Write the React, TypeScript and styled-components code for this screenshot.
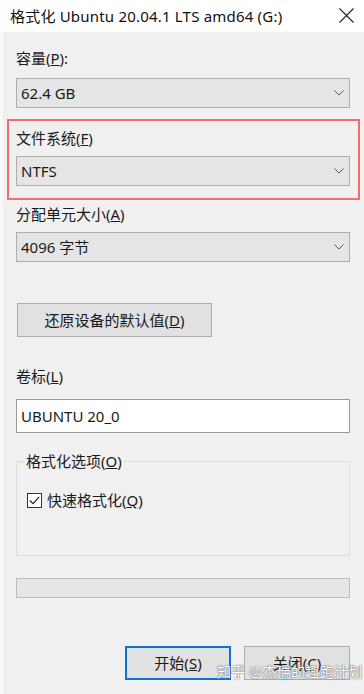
import React from "react";
import styled, { createGlobalStyle } from "styled-components";

const Global = createGlobalStyle`
  html, body { margin: 0; padding: 0; }
  body {
    font-family: "Noto Sans", "Noto Sans CJK SC", sans-serif;
    font-size: 15px;
    color: #1a1a1a;
    background: #f0f0f0;
  }
  #root { width: 364px; height: 694px; }
`;

const Window = styled.div`
  position: relative;
  width: 364px;
  height: 694px;
  display: flex;
  flex-direction: column;
  overflow: hidden;
`;

const TitleBar = styled.div`
  height: 32px;
  flex: none;
  background: #ffffff;
  display: flex;
  align-items: center;
  justify-content: space-between;
  padding: 0 10px 1px 10px;
  box-sizing: border-box;
  font-size: 15px;
  letter-spacing: 0.2px;
  color: #111;
`;

const CloseButton = styled.div`
  width: 16px;
  height: 16px;
  display: flex;
  align-items: center;
  justify-content: center;
`;

const Body = styled.div`
  flex: 1;
  background: #f0f0f0;
  border-left: 3px solid #f9f9f9;
  padding: 0 14px 0 13px;
  display: flex;
  flex-direction: column;
`;

const Label = styled.div<{ $mt: number }>`
  margin-top: ${(p) => p.$mt}px;
  height: 20px;
  line-height: 20px;
  white-space: nowrap;
`;

const Select = styled.div<{ $mt: number }>`
  margin-top: ${(p) => p.$mt}px;
  height: 30px;
  box-sizing: border-box;
  border: 1px solid #adadad;
  background: #e5e5e5;
  display: flex;
  align-items: center;
  justify-content: space-between;
  padding: 0 5px 0 4px;
  line-height: 20px;
`;

const Highlight = styled.div`
  margin: 11px -10px 0 -9px;
  border: 2px solid rgb(236, 110, 110);
  padding: 7px 8px 12px 7px;
  display: flex;
  flex-direction: column;
`;

const PlainButton = styled.div<{ $primary?: boolean }>`
  height: 34px;
  box-sizing: border-box;
  background: #e1e1e1;
  border: ${(p) => (p.$primary ? "2px solid #0a74d0" : "1px solid #adadad")};
  display: flex;
  align-items: center;
  justify-content: center;
  line-height: 20px;
  white-space: nowrap;
`;

const RestoreButton = styled(PlainButton)`
  margin-top: 41px;
  margin-left: 1px;
  width: 195px;
`;

const TextBox = styled.div`
  margin-top: 13px;
  height: 34px;
  box-sizing: border-box;
  border: 1px solid #9a9a9a;
  background: #ffffff;
  display: flex;
  align-items: center;
  padding: 0 4px;
  line-height: 20px;
`;

const Group = styled.fieldset`
  margin: 18px 0 0 0;
  border: 1px solid #dcdcdc;
  padding: 19px 10px 0 10px;
  height: 105px;
  box-sizing: border-box;
  min-width: 0;
`;

const Legend = styled.legend`
  margin-left: -3px;
  padding: 0 2px;
  line-height: 20px;
  font-size: 15px;
`;

const CheckRow = styled.div`
  display: flex;
  align-items: center;
  gap: 5px;
  height: 20px;
  line-height: 20px;
`;

const CheckBox = styled.div`
  width: 15px;
  height: 15px;
  box-sizing: border-box;
  border: 1px solid #333;
  background: #fff;
  display: flex;
  align-items: center;
  justify-content: center;
`;

const Progress = styled.div`
  margin-top: 22px;
  height: 20px;
  box-sizing: border-box;
  border: 1px solid #bcbcbc;
  background: #e6e6e6;
`;

const Footer = styled.div`
  margin-top: 48px;
  display: flex;
  justify-content: flex-end;
  gap: 13px;
`;

const FooterButton = styled(PlainButton)`
  width: 106px;
`;

const Watermark = styled.div`
  position: absolute;
  left: 217px;
  top: 663px;
  font-size: 14px;
  line-height: 18px;
  color: #ffffff;
  letter-spacing: 0.3px;
  text-shadow: 0 0 1px #555, 0 0 2px #777;
  white-space: nowrap;
`;

const Chevron = () => (
  <svg width="10" height="6" viewBox="0 0 10 6">
    <path d="M0.5 0.5 L5 5 L9.5 0.5" fill="none" stroke="#555" strokeWidth="1" />
  </svg>
);

export default function App() {
  return (
    <>
      <Global />
      <Window>
        <TitleBar>
          <span>格式化 Ubuntu 20.04.1 LTS amd64 (G:)</span>
          <CloseButton>
            <svg width="15" height="15" viewBox="0 0 15 15">
              <path d="M0.5 0.5 L14.5 14.5 M14.5 0.5 L0.5 14.5" stroke="#222" strokeWidth="1.1" />
            </svg>
          </CloseButton>
        </TitleBar>
        <Body>
          <Label $mt={16}>
            容量(<u>P</u>):
          </Label>
          <Select $mt={10}>
            <span>62.4 GB</span>
            <Chevron />
          </Select>
          <Highlight>
            <Label $mt={0}>
              文件系统(<u>F</u>)
            </Label>
            <Select $mt={8}>
              <span>NTFS</span>
              <Chevron />
            </Select>
          </Highlight>
          <Label $mt={4}>
            分配单元大小(<u>A</u>)
          </Label>
          <Select $mt={8}>
            <span>4096 字节</span>
            <Chevron />
          </Select>
          <RestoreButton>
            还原设备的默认值(<u>D</u>)
          </RestoreButton>
          <Label $mt={29}>
            卷标(<u>L</u>)
          </Label>
          <TextBox>UBUNTU 20_0</TextBox>
          <Group>
            <Legend>
              格式化选项(<u>O</u>)
            </Legend>
            <CheckRow>
              <CheckBox>
                <svg width="11" height="9" viewBox="0 0 11 9">
                  <path d="M0.8 4.5 L4 7.6 L10.2 0.8" fill="none" stroke="#222" strokeWidth="1.2" />
                </svg>
              </CheckBox>
              <span>
                快速格式化(<u>Q</u>)
              </span>
            </CheckRow>
          </Group>
          <Progress />
          <Footer>
            <FooterButton $primary>
              开始(<u>S</u>)
            </FooterButton>
            <FooterButton>
              关闭(<u>C</u>)
            </FooterButton>
          </Footer>
        </Body>
        <Watermark>知乎 @杰瑞的趣跑计划</Watermark>
      </Window>
    </>
  );
}
